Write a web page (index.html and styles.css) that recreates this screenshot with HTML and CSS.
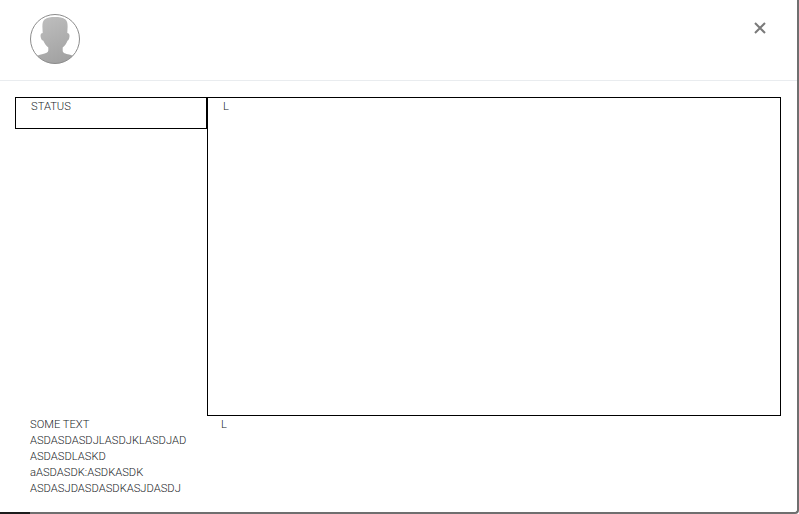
FILE: index.html
```html
<!DOCTYPE html>
<html lang="en">
<head>
<meta charset="utf-8">
<title>Profile</title>
<link rel="stylesheet" href="styles.css">
</head>
<body>
<div class="modal">
  <header class="modal-header">
    <svg class="avatar" width="52" height="52" viewBox="0 0 52 52" aria-hidden="true">
      <defs>
        <linearGradient id="fig" x1="0.3" y1="0" x2="0.7" y2="1">
          <stop offset="0" stop-color="#bdbdbd"/>
          <stop offset="1" stop-color="#a0a0a0"/>
        </linearGradient>
        <clipPath id="disc"><circle cx="26" cy="26" r="24.5"/></clipPath>
      </defs>
      <circle cx="26" cy="26" r="24.5" fill="#fff"/>
      <path clip-path="url(#disc)" fill="url(#fig)" d="M26 4C22 4 18 4.500 15.500 6.500C13.800 8 13.300 10.500 13.400 14L13.700 20C12 20.300 11.300 21.500 11.600 23.500C12 26 12.800 27.500 14.300 27.700C15.500 30.500 17.500 33 19.300 34.500V37.500C19.300 39.500 17 40.300 13 41.300C10 42 7.500 42.700 5 44V52H47V44C44.500 42.700 42 42 39 41.300C35 40.300 33.700 39.500 33.700 37.500V34.500C35.500 33 37.500 30.500 38.500 27.700C39.500 27.500 40.200 26 40.500 23.500C40.700 21.500 40 20.300 38.300 20L38.600 14C38.700 10.500 38.200 8 36.500 6.500C34 4.500 30 4 26 4Z"/>
      <circle cx="26" cy="26" r="24.500" fill="none" stroke="#8c8c8c" stroke-width="1"/>
    </svg>
    <button class="close" type="button" aria-label="Close">
      <svg width="12" height="12" viewBox="0 0 12 12" aria-hidden="true"><path d="M1 1L11 11M11 1L1 11" stroke="#7a7a7a" stroke-width="2" fill="none"/></svg>
    </button>
  </header>
  <main class="modal-body">
    <div class="status-box">STATUS</div>
    <div class="main-box">L</div>
    <div class="info">
      <div>SOME TEXT</div>
      <div>ASDASDASDJLASDJKLASDJAD</div>
      <div>ASDASDLASKD</div>
      <div>aASDASDK:ASDKASDK</div>
      <div>ASDASJDASDASDKASJDASDJ</div>
    </div>
    <div class="side-note">L</div>
  </main>
</div>
</body>
</html>
```
FILE: styles.css
```css
* { box-sizing: border-box; }
html, body { margin: 0; padding: 0; background: #fff; }
body {
  width: 799px;
  height: 514px;
  overflow: hidden;
  font-family: Roboto, "Liberation Sans", sans-serif;
  font-size: 11.2px;
  font-weight: 300;
  line-height: 16px;
  color: #212529;
}
.modal {
  position: relative;
  width: 799px;
  height: 514px;
  border-right: 2px solid #6f6f6f;
  border-bottom: 2px solid #6f6f6f;
  border-bottom-right-radius: 4px;
  background: #fff;
}
.modal::after {
  content: "";
  position: absolute;
  left: 0;
  bottom: -2px;
  width: 30px;
  height: 2px;
  background: #1c1c1c;
}
.modal-header {
  height: 81px;
  border-bottom: 1px solid #e9ecef;
  padding: 13px 31px 0 29px;
  display: flex;
  justify-content: space-between;
  align-items: flex-start;
}
.avatar { display: block; }
.close {
  margin: 9px 0 0;
  padding: 0;
  border: 0;
  background: none;
  width: 12px;
  height: 12px;
  line-height: 0;
}
.modal-body {
  padding: 16px 16px 0 15px;
  display: grid;
  grid-template-columns: 192px 574px;
  grid-template-rows: 32px 287px auto;
}
.status-box {
  grid-column: 1;
  grid-row: 1;
  border: 1px solid #000;
  padding: 1px 0 0 15px;
}
.main-box {
  grid-column: 2;
  grid-row: 1 / span 2;
  border: 1px solid #000;
  padding: 1px 0 0 15px;
}
.info {
  grid-column: 1;
  grid-row: 3;
  padding: 1px 0 0 15px;
}
.side-note {
  grid-column: 2;
  grid-row: 3;
  padding: 1px 0 0 14px;
}
```
